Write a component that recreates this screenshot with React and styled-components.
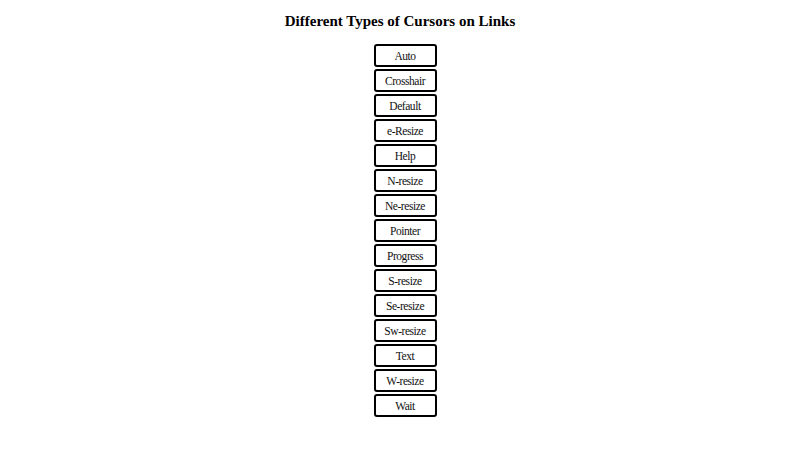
import styled, { createGlobalStyle } from "styled-components";

const GlobalStyle = createGlobalStyle`
  body {
    margin: 0;
    background: #fff;
    font-family: "Liberation Serif", "Times New Roman", serif;
    color: #000;
  }
`;

const Page = styled.div`
  display: flex;
  flex-direction: column;
  align-items: center;
  padding-top: 13px;
`;

const Title = styled.h1`
  margin: 0 0 14px 0;
  font-size: 15px;
  font-weight: bold;
`;

const List = styled.div`
  display: flex;
  flex-direction: column;
  gap: 2px;
  padding-left: 10px;
`;

const CursorLink = styled.a`
  display: flex;
  align-items: center;
  justify-content: center;
  box-sizing: border-box;
  width: 63px;
  height: 23px;
  border: 2px solid #000;
  border-radius: 3px;
  font-size: 11.5px;
  letter-spacing: -0.45px;
  color: #111;
  text-decoration: none;
  cursor: ${(p) => p.$cursor};
`;

const cursors = [
  ["Auto", "auto"],
  ["Crosshair", "crosshair"],
  ["Default", "default"],
  ["e-Resize", "e-resize"],
  ["Help", "help"],
  ["N-resize", "n-resize"],
  ["Ne-resize", "ne-resize"],
  ["Pointer", "pointer"],
  ["Progress", "progress"],
  ["S-resize", "s-resize"],
  ["Se-resize", "se-resize"],
  ["Sw-resize", "sw-resize"],
  ["Text", "text"],
  ["W-resize", "w-resize"],
  ["Wait", "wait"],
];

export default function App() {
  return (
    <>
      <GlobalStyle />
      <Page>
        <Title>Different Types of Cursors on Links</Title>
        <List>
          {cursors.map(([label, c]) => (
            <CursorLink key={c} href="#" $cursor={c}>
              {label}
            </CursorLink>
          ))}
        </List>
      </Page>
    </>
  );
}
